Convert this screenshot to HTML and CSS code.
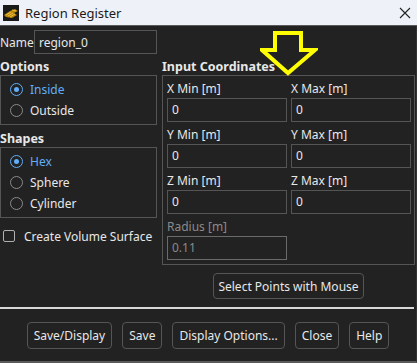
FILE: index.html
```html
<html>
    <head>
        <link rel="stylesheet" href="styles.css">
    </head>
    <body>
        <div class="titlebar">
            <svg class="app-icon" width="16" height="16" viewBox="0 0 16 16">
                <rect x="0" y="0" width="16" height="16" fill="#1a1a1a"/>
                <path d="M1 10 L7 6 L12 4 L15 6 L11 8 L14 10 L9 13 L3 12 Z" fill="#b8860b"/>
                <path d="M3 10 L8 7 M5 11 L10 8 M7 12 L12 9 M9 5 L13 6" stroke="#f0c040" stroke-width="1"/>
            </svg>
            <span class="title">Region Register</span>
            <svg class="close-x" width="12" height="12" viewBox="0 0 12 12">
                <path d="M1 1 L11 11 M11 1 L1 11" stroke="#222" stroke-width="1.1"/>
            </svg>
        </div>

        <div class="dialog">
            <div class="name-row">
                <label for="name">Name</label>
                <input type="text" id="name" class="field name-field" value="region_0">
            </div>

            <div class="main">
                <div class="left">
                    <div class="heading">Options</div>
                    <div class="group">
                        <div class="radio-row selected"><span class="radio"></span>Inside</div>
                        <div class="radio-row"><span class="radio"></span>Outside</div>
                    </div>

                    <div class="heading shapes">Shapes</div>
                    <div class="group">
                        <div class="radio-row selected"><span class="radio"></span>Hex</div>
                        <div class="radio-row"><span class="radio"></span>Sphere</div>
                        <div class="radio-row"><span class="radio"></span>Cylinder</div>
                    </div>

                    <div class="check-row"><span class="checkbox"></span>Create Volume Surface</div>
                </div>

                <div class="right">
                    <div class="heading">Input Coordinates</div>
                    <div class="group coords">
                        <div class="coord">
                            <div class="coord-label">X Min [m]</div>
                            <div class="field">0</div>
                        </div>
                        <div class="coord">
                            <div class="coord-label">X Max [m]</div>
                            <div class="field">0</div>
                        </div>
                        <div class="coord">
                            <div class="coord-label">Y Min [m]</div>
                            <div class="field">0</div>
                        </div>
                        <div class="coord">
                            <div class="coord-label">Y Max [m]</div>
                            <div class="field">0</div>
                        </div>
                        <div class="coord">
                            <div class="coord-label">Z Min [m]</div>
                            <div class="field">0</div>
                        </div>
                        <div class="coord">
                            <div class="coord-label">Z Max [m]</div>
                            <div class="field">0</div>
                        </div>
                        <div class="coord disabled">
                            <div class="coord-label">Radius [m]</div>
                            <div class="field">0.11</div>
                        </div>
                    </div>
                    <div class="select-wrap">
                        <button class="btn select-btn">Select Points with Mouse</button>
                    </div>
                </div>
            </div>

            <div class="separator"></div>

            <div class="actions">
                <button class="btn">Save/Display</button>
                <button class="btn">Save</button>
                <button class="btn">Display Options...</button>
                <button class="btn">Close</button>
                <button class="btn">Help</button>
            </div>
        </div>

        <!-- yellow callout arrow drawn over the dialog -->
        <svg class="callout" width="58" height="46" viewBox="0 0 58 46">
            <path d="M13 2 L39 2 L39 19 L53 19 L26 42 L0 19 L13 19 Z" transform="translate(2,0)" fill="none" stroke="#ffff00" stroke-width="4" stroke-linejoin="miter"/>
        </svg>
    </body>
</html>
```

FILE: styles.css
```css
body {
    margin: 0;
    width: 417px;
    height: 363px;
    overflow: hidden;
    background: #222222;
    font-family: "Noto Sans", "Open Sans", sans-serif;
    font-size: 12px;
    color: #e8e8e8;
    position: relative;
}
.titlebar {
    height: 25px;
    background: #eef2f8;
    border-bottom: 1px solid #5a5a5a;
    display: flex;
    align-items: center;
    padding: 0 0 0 3px;
    color: #1a1a1a;
}
.app-icon {
    margin: 0 6px 0 0;
}
.title {
    font-size: 13px;
    flex: 1;
}
.close-x {
    margin: 0 6px 0 0;
}
.dialog {
    height: 335px;
    border-bottom: 2px solid #5a5a5a;
    border-right: 1px solid #333333;
}
.name-row {
    display: flex;
    align-items: center;
    padding: 4px 0 0 0;
    height: 24px;
}
.name-row label {
    width: 34px;
}
.field {
    box-sizing: border-box;
    height: 24px;
    border: 1px solid #555555;
    background: #222222;
    color: #e8e8e8;
    font-family: inherit;
    font-size: 12px;
    padding: 0 0 0 4px;
    line-height: 22px;
}
.name-field {
    width: 123px;
    outline: none;
}
.main {
    display: flex;
    gap: 5px;
    padding: 5px 0 0 0;
}
.left {
    width: 157px;
}
.right {
    width: 253px;
}
.heading {
    font-weight: bold;
    font-size: 12.5px;
    line-height: 16px;
    height: 16px;
}
.shapes {
    margin: 6px 0 0 0;
}
.group {
    border: 1px solid #555555;
    padding: 3px 0 3px 0;
}
.radio-row {
    display: flex;
    align-items: center;
    height: 21px;
    padding: 0 0 0 9px;
}
.radio {
    box-sizing: border-box;
    width: 13px;
    height: 13px;
    border: 1px solid #8a8a8a;
    border-radius: 50%;
    margin: 0 7px 0 0;
    display: flex;
    align-items: center;
    justify-content: center;
}
.selected {
    color: #62aef7;
}
.selected .radio {
    border-color: #62aef7;
}
.selected .radio::after {
    content: "";
    width: 5px;
    height: 5px;
    border-radius: 50%;
    background: #62aef7;
}
.check-row {
    display: flex;
    align-items: center;
    height: 20px;
    margin: 8px 0 0 0;
    padding: 0 0 0 3px;
}
.checkbox {
    box-sizing: border-box;
    width: 12px;
    height: 12px;
    border: 1px solid #b0b0b0;
    border-radius: 2px;
    margin: 0 9px 0 0;
}
.coords {
    display: grid;
    grid-template-columns: 120px 120px;
    column-gap: 4px;
    row-gap: 5px;
    padding: 5px 3px 4px 4px;
}
.coord-label {
    line-height: 16px;
    height: 16px;
    margin: 0 0 1px 0;
}
.disabled {
    color: #8a8a8a;
}
.disabled .field {
    color: #8a8a8a;
    border-color: #6a6a6a;
}
.select-wrap {
    display: flex;
    justify-content: center;
    padding: 8px 0 0 0;
}
.btn {
    box-sizing: border-box;
    height: 27px;
    background: #222222;
    border: 1px solid #555555;
    border-radius: 4px;
    color: #e8e8e8;
    font-family: inherit;
    font-size: 12px;
    padding: 0 6px;
    white-space: nowrap;
}
.select-btn {
    height: 26px;
    padding: 0 4px;
}
.separator {
    margin: 8px 2px 0 0;
    height: 2px;
    background: #d8d8d8;
}
.actions {
    display: flex;
    justify-content: center;
    gap: 10px;
    padding: 13px 0 0 0;
}
.callout {
    position: absolute;
    left: 260px;
    top: 31px;
}
```
